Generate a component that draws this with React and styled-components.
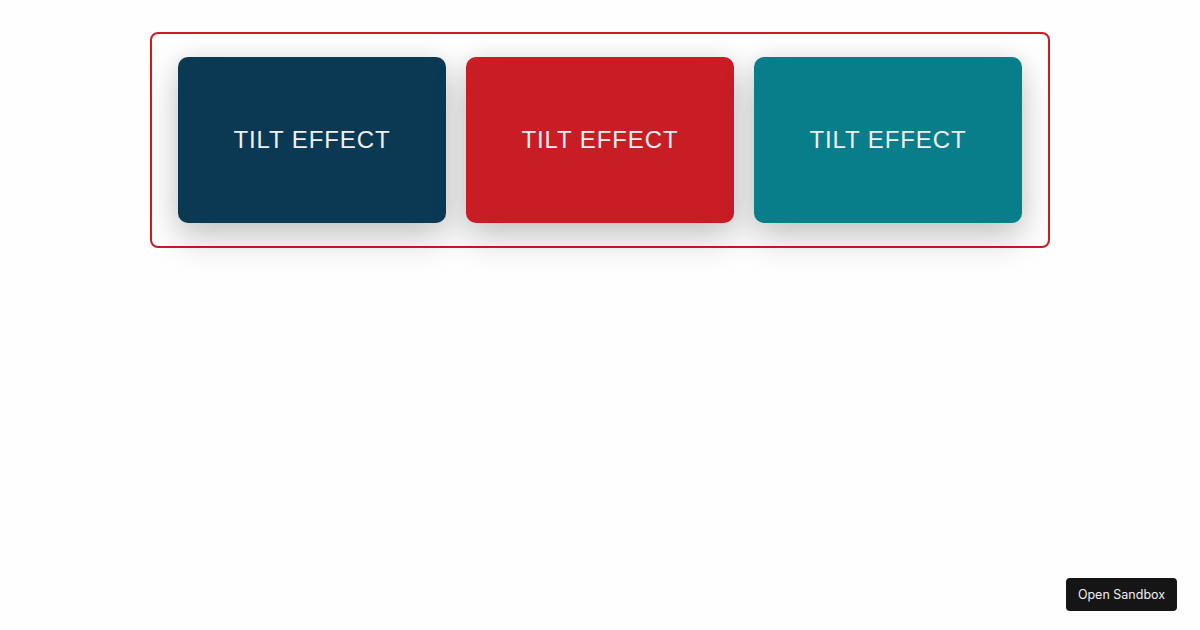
import React from "react"
import styled, { createGlobalStyle } from "styled-components"

const GlobalStyle = createGlobalStyle`
  html, body {
    margin: 0;
    padding: 0;
    background: #fefefe;
    font-family: "Liberation Sans", Arial, sans-serif;
  }
`

const Page = styled.div`
  display: flex;
  justify-content: center;
  align-items: flex-start;
  padding-top: 32px;
  min-height: 630px;
  box-sizing: border-box;
`

const Frame = styled.div`
  box-sizing: border-box;
  width: 900px;
  display: grid;
  grid-template-columns: repeat(3, 268px);
  column-gap: 20px;
  padding: 23px 25px 23px 26px;
  border: 2px solid #c81d25;
  border-radius: 8px;
`

const Card = styled.div`
  height: 166px;
  display: flex;
  align-items: center;
  justify-content: center;
  border-radius: 10px;
  background-color: ${(props) => props.color};
  box-shadow: 0 16px 36px rgba(0, 0, 0, 0.2), 0 0 22px rgba(0, 0, 0, 0.08);
  color: #f0f0f0;
  font-size: 24px;
  letter-spacing: 0.9px;
`

const SandboxButton = styled.a`
  position: fixed;
  right: 23px;
  bottom: 19px;
  width: 111px;
  height: 33px;
  display: flex;
  align-items: center;
  justify-content: center;
  background: #151515;
  color: #eef2f5;
  font-family: "Inter", "Liberation Sans", sans-serif;
  font-size: 12.5px;
  border-radius: 4px;
  text-decoration: none;
`

const cardColors = ["#0b3954", "#c81d25", "#087e8b"]

export default function App() {
  return (
    <>
      <GlobalStyle />
      <Page>
        <Frame>
          {cardColors.map((color) => (
            <Card key={color} color={color}>
              TILT EFFECT
            </Card>
          ))}
        </Frame>
      </Page>
      <SandboxButton href="#">Open Sandbox</SandboxButton>
    </>
  )
}
